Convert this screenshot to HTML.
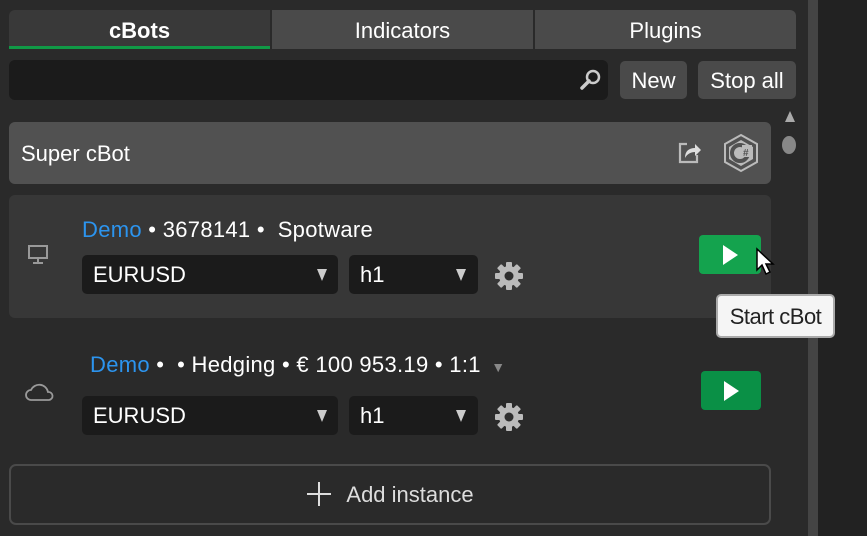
<!DOCTYPE html>
<html><head><style>
*{box-sizing:border-box;margin:0;padding:0}
body{width:867px;height:536px;background:#2a2a2a;font-family:"Liberation Sans",sans-serif;color:#fff;position:relative;overflow:hidden}
.a{position:absolute}
.tab{position:absolute;top:10px;height:39px;background:#4a4a4a;font-size:22px;text-align:center;line-height:41px}
.sel{background:#1b1b1b;border-radius:5px;height:39px;font-size:22px;line-height:40px;padding-left:11px}
.arr{position:absolute;top:14px;width:0;height:0;border-left:5px solid transparent;border-right:5px solid transparent;border-top:12px solid #ccc}
.btn{background:#4a4a4a;border-radius:5px;font-size:22px;line-height:40px;text-align:center}
.play{border-radius:4px}
</style></head><body>
<svg width="0" height="0" style="position:absolute"><defs><g id="gear"><g fill="#bbb"><rect x="12" y="1" width="6" height="28" rx="1"/><rect x="12" y="1" width="6" height="28" rx="1" transform="rotate(45 15 15)"/><rect x="12" y="1" width="6" height="28" rx="1" transform="rotate(90 15 15)"/><rect x="12" y="1" width="6" height="28" rx="1" transform="rotate(135 15 15)"/><circle cx="15" cy="15" r="10"/></g><circle cx="15" cy="15" r="4.5" fill="#2e2e2e"/></g></defs></svg>
<div class="a" style="left:808px;top:0;width:10px;height:536px;background:#444"></div>
<div class="a" style="left:818px;top:0;width:49px;height:536px;background:#222"></div>

<div class="tab" style="left:9px;width:261px;background:#393939;border-radius:6px 0 0 0;font-weight:bold">cBots</div>
<div class="a" style="left:9px;top:46px;width:261px;height:3px;background:#109946"></div>
<div class="tab" style="left:272px;width:261px">Indicators</div>
<div class="tab" style="left:535px;width:261px;border-radius:0 6px 0 0">Plugins</div>

<div class="a" style="left:9px;top:60px;width:599px;height:40px;background:#1b1b1b;border-radius:6px"></div>
<svg class="a" style="left:578px;top:67px" width="26" height="26" viewBox="0 0 26 26"><circle cx="15" cy="10" r="6" fill="none" stroke="#ccc" stroke-width="2.5"/><line x1="11" y1="14" x2="4" y2="21" stroke="#ccc" stroke-width="3.5" stroke-linecap="round"/></svg>
<div class="a btn" style="left:620px;top:61px;width:67px;height:38px">New</div>
<div class="a btn" style="left:698px;top:61px;width:98px;height:38px">Stop all</div>

<div class="a" style="left:785px;top:111px;border-left:5px solid transparent;border-right:5px solid transparent;border-bottom:11px solid #aaa"></div>
<div class="a" style="left:782px;top:136px;width:14px;height:18px;border-radius:50%;background:#888"></div>

<div class="a" style="left:9px;top:122px;width:762px;height:62px;background:#515151;border-radius:6px"></div>
<div class="a" style="left:21px;top:141px;font-size:22px">Super cBot</div>
<svg class="a" style="left:676px;top:138px" width="28" height="28" viewBox="0 0 28 28"><path d="M11 6H4v18h17v-7" fill="none" stroke="#bbb" stroke-width="2.2"/><path d="M9 20c0-7 4-10 10-10V6l6 6-6 6v-4c-4 0-8 2-10 6z" fill="#ddd"/></svg>
<svg class="a" style="left:722px;top:133px" width="38" height="40" viewBox="0 0 38 40"><path d="M19 2l16 9v18l-16 9-16-9V11z" fill="none" stroke="#bbb" stroke-width="2"/><path d="M19 7l12 7v12l-12 7-12-7V14z" fill="#bbb"/><circle cx="18" cy="20" r="8" fill="none" stroke="#515151" stroke-width="4"/><rect x="20" y="12" width="10" height="12" fill="#bbb"/><text x="21" y="23" font-size="10" fill="#515151" font-family="Liberation Sans" font-weight="bold">#</text></svg>

<div class="a" style="left:9px;top:195px;width:762px;height:123px;background:#373737;border-radius:6px"></div>
<svg class="a" style="left:27px;top:244px" width="22" height="22" viewBox="0 0 22 22"><rect x="2" y="2" width="18" height="12" fill="none" stroke="#999" stroke-width="2"/><rect x="10" y="14" width="2" height="4" fill="#999"/><rect x="6" y="18" width="10" height="2" fill="#999"/></svg>
<div class="a" style="left:82px;top:217px;font-size:22px;white-space:nowrap;letter-spacing:0.3px"><span style="color:#2c94ee">Demo</span> • 3678141 •&nbsp; Spotware</div>
<div class="a sel" style="left:82px;top:255px;width:256px">EURUSD<span class="arr" style="left:235px"></span></div>
<div class="a sel" style="left:349px;top:255px;width:129px">h1<span class="arr" style="left:107px"></span></div>
<svg class="a" style="left:494px;top:261px" width="30" height="30" viewBox="0 0 30 30"><use href="#gear"/></svg>
<div class="a play" style="left:699px;top:235px;width:62px;height:39px;background:#14a34e"></div>
<div class="a" style="left:723px;top:245px;border-top:10px solid transparent;border-bottom:10px solid transparent;border-left:15px solid #fff"></div>
<svg class="a" style="left:755px;top:247px" width="22" height="30" viewBox="0 0 22 30"><path d="M2 2v21l5-5 4 9 4-2-4-8h7z" fill="#fff" stroke="#000" stroke-width="1.5"/></svg>
<div class="a" style="left:716px;top:294px;width:119px;height:44px;background:#f5f5f5;border:2px solid #aaa;border-radius:5px;color:#222;font-size:22px;line-height:42px;text-align:center;letter-spacing:-0.5px">Start cBot</div>

<svg class="a" style="left:24px;top:378px" width="32" height="26" viewBox="0 0 32 26"><path d="M7 22a5 5 0 0 1 0-10 9 9 0 0 1 17 2 4 4 0 0 1 1 8z" fill="none" stroke="#999" stroke-width="1.8"/></svg>
<div class="a" style="left:90px;top:352px;font-size:22px;white-space:nowrap;letter-spacing:0.3px"><span style="color:#2c94ee">Demo</span> • &nbsp;• Hedging • € 100 953.19 • 1:1 <span style="color:#888;font-size:14px;margin-left:4px">▼</span></div>
<div class="a sel" style="left:82px;top:396px;width:256px">EURUSD<span class="arr" style="left:235px"></span></div>
<div class="a sel" style="left:349px;top:396px;width:129px">h1<span class="arr" style="left:107px"></span></div>
<svg class="a" style="left:494px;top:402px" width="30" height="30" viewBox="0 0 30 30"><use href="#gear"/></svg>
<div class="a play" style="left:701px;top:371px;width:60px;height:39px;background:#0a9046"></div>
<div class="a" style="left:724px;top:381px;border-top:10px solid transparent;border-bottom:10px solid transparent;border-left:15px solid #fff"></div>

<div class="a" style="left:9px;top:464px;width:762px;height:61px;border:2px solid #4a4a4a;border-radius:7px;font-size:22px;text-align:center;line-height:57px;color:#ddd"><svg width="26" height="26" viewBox="0 0 26 26" style="vertical-align:-5px;margin-right:14px"><path d="M13 1v24M1 13h24" stroke="#ddd" stroke-width="2"/></svg>Add instance</div>
</body></html>
